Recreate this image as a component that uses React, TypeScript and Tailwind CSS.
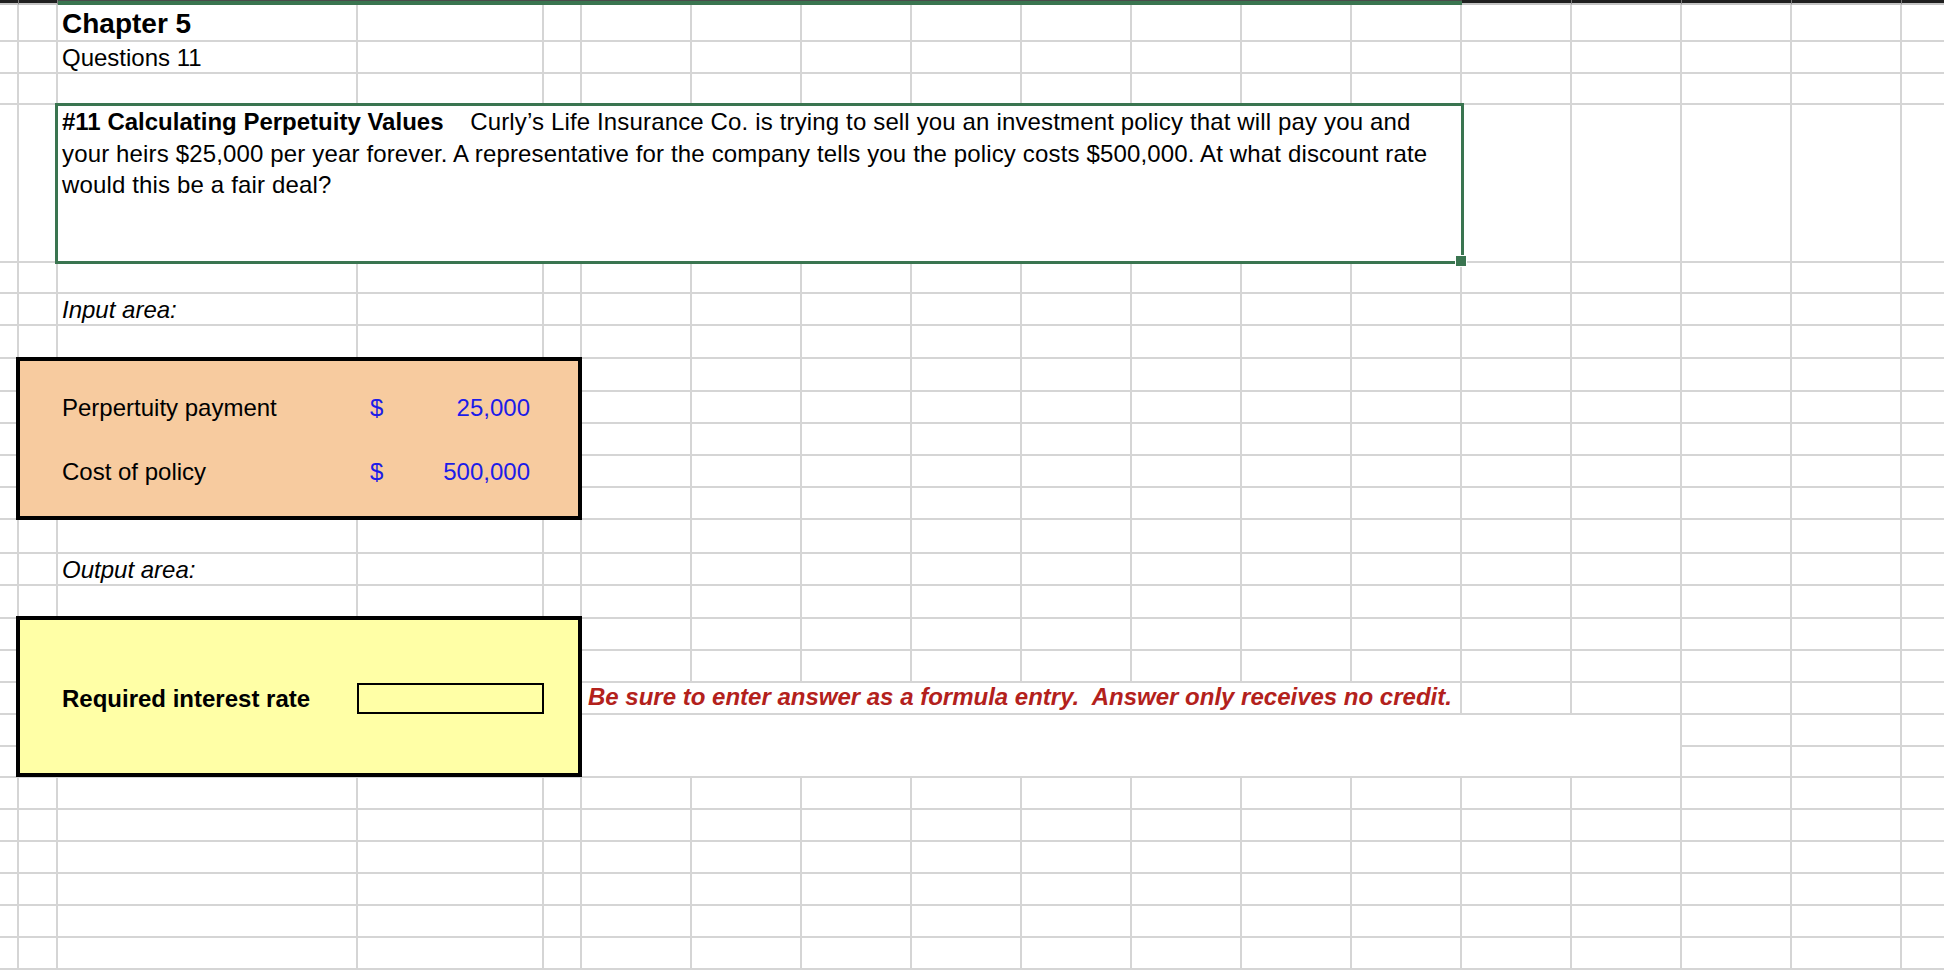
import React from "react";

const NUM_COLS = 18;
const NUM_ROWS = 26;

const App = () => {
  // background grid cells (rows start at 2, row 1 is the header edge)
  const cells: React.ReactNode[] = [];
  for (let c = 1; c <= NUM_COLS; c++) {
    const selected = c >= 3 && c <= 13;
    cells.push(
      <div
        key={`h-${c}`}
        style={{ gridRow: 1, gridColumn: c }}
        className={
          selected
            ? "h-[5px] bg-[#3a7550] border-t border-[#4a4a4a]"
            : "h-[5px] bg-[#1f1f1f] border-b-2 border-r border-b-[#c4c4c4] border-r-[#7a7a7a]"
        }
      />
    );
  }
  for (let r = 2; r <= NUM_ROWS + 1; r++) {
    for (let c = 1; c <= NUM_COLS; c++) {
      cells.push(
        <div
          key={`${r}-${c}`}
          style={{ gridRow: r, gridColumn: c }}
          className="border-r-2 border-b-2 border-[#d5d5d5]"
        />
      );
    }
  }

  return (
    <div className="w-[1944px] h-[970px] overflow-hidden bg-white text-black font-['Liberation_Sans',Arial,Helvetica,sans-serif]">
      <div className="grid grid-cols-[19px_39px_300px_186px_38px_repeat(13,110px)] grid-rows-[5px_37px_32px_31px_158px_31px_32px_33px_33px_32px_32px_32px_32px_34px_32px_33px_32px_32px_32px_32px_31px_32px_32px_32px_32px_32px_32px]">
        {cells}

        {/* Title */}
        <div className="row-start-2 col-start-3 flex items-end pb-[2px] pl-[4px] text-[28px] leading-[32px] font-bold whitespace-nowrap">
          Chapter 5
        </div>
        <div className="row-start-3 col-start-3 flex items-end pb-[2px] pl-[4px] text-[24px] leading-[28px] whitespace-nowrap">
          Questions 11
        </div>

        {/* Question box */}
        <div className="relative row-start-5 col-start-3 col-span-11 -ml-[3px] -mr-[2px] -mt-[2px] -mb-[1px] border-[3px] border-[#3a7550] bg-white pl-[4px] text-[24px] leading-[31.6px] whitespace-pre">
          <span className="font-bold">{"#11 Calculating Perpetuity Values    "}</span>
          <span className="tracking-[0.15px]">
            {"Curly’s Life Insurance Co. is trying to sell you an investment policy that will pay you and"}
            <br />
            {"your heirs $25,000 per year forever. A representative for the company tells you the policy costs $500,000. At what discount rate"}
            <br />
            {"would this be a fair deal?"}
          </span>
          <div className="absolute -right-[6px] -bottom-[6px] w-[12px] h-[12px] bg-[#3a7550] border border-white" />
        </div>

        {/* Input area */}
        <div className="row-start-7 col-start-3 flex items-end pb-[2px] pl-[4px] text-[24px] leading-[28px] italic whitespace-nowrap">
          Input area:
        </div>
        <div className="row-start-9 row-span-5 col-start-2 col-span-4 -ml-[3px] -mt-[2px] border-4 border-black bg-[#f7cb9f]" />
        <div className="row-start-10 col-start-3 flex items-end pb-[2px] pl-[4px] text-[24px] leading-[28px] whitespace-nowrap">
          Perpertuity payment
        </div>
        <div className="row-start-10 col-start-4 flex items-end justify-between pb-[2px] pl-[12px] pr-[14px] text-[24px] leading-[28px] text-[#1c1ce8]">
          <span>$</span>
          <span>25,000</span>
        </div>
        <div className="row-start-12 col-start-3 flex items-end pb-[2px] pl-[4px] text-[24px] leading-[28px] whitespace-nowrap">
          Cost of policy
        </div>
        <div className="row-start-12 col-start-4 flex items-end justify-between pb-[2px] pl-[12px] pr-[14px] text-[24px] leading-[28px] text-[#1c1ce8]">
          <span>$</span>
          <span>500,000</span>
        </div>

        {/* Output area */}
        <div className="row-start-15 col-start-3 flex items-end pb-[2px] pl-[4px] text-[24px] leading-[28px] italic whitespace-nowrap">
          Output area:
        </div>
        <div className="row-start-17 row-span-5 col-start-2 col-span-4 -ml-[3px] -mt-[3px] mb-[1px] border-4 border-black bg-[#ffffa6]" />
        <div className="row-start-19 col-start-3 flex items-end pb-[2px] pl-[4px] text-[24px] leading-[28px] font-bold whitespace-nowrap">
          Required interest rate
        </div>
        <div className="row-start-19 col-start-4 -ml-[1px] mb-[1px] border-2 border-black" />

        <div className="row-start-19 col-start-6 col-span-8 flex items-end pb-[2px] pl-[6px] bg-white border-r-2 border-b-2 border-[#d5d5d5] text-[24px] leading-[28px] font-bold italic text-[#b3211c] whitespace-pre">
          {"Be sure to enter answer as a formula entry.  Answer only receives no credit."}
        </div>
        <div className="row-start-20 row-span-2 col-start-6 col-span-10 bg-white border-r-2 border-b-2 border-[#d5d5d5]" />
      </div>
    </div>
  );
};

export default App;
